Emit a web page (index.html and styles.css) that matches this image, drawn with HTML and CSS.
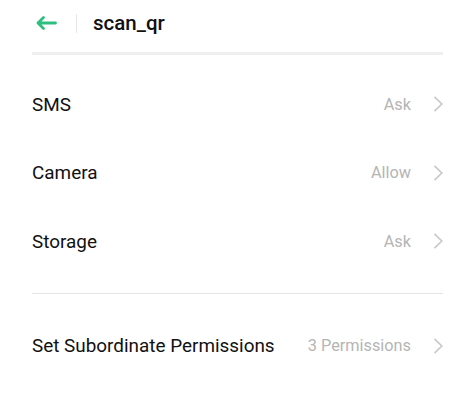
FILE: index.html
```html
<!DOCTYPE html>
<html>
<head>
<meta charset="utf-8">
<link rel="stylesheet" href="styles.css">
</head>
<body>
<div class="page">
  <header class="header">
    <svg class="back" width="22" height="16" viewBox="0 0 22 16">
      <path d="M20.5 8H3M8.5 2.5L3 8l5.5 5.5" fill="none" stroke="#2dbf7f" stroke-width="2.8" stroke-linecap="round" stroke-linejoin="round"/>
    </svg>
    <span class="vsep"></span>
    <span class="title">scan_qr</span>
  </header>
  <div class="bar"></div>
  <div class="list">
    <div class="row"><span class="label">SMS</span><span class="value">Ask</span><svg class="chev" width="11" height="16" viewBox="0 0 11 16"><path d="M2.5 0.8L9.8 8l-7.3 7.2" fill="none" stroke="#c9c9c9" stroke-width="1.7"/></svg></div>
    <div class="row"><span class="label">Camera</span><span class="value">Allow</span><svg class="chev" width="11" height="16" viewBox="0 0 11 16"><path d="M2.5 0.8L9.8 8l-7.3 7.2" fill="none" stroke="#c9c9c9" stroke-width="1.7"/></svg></div>
    <div class="row"><span class="label">Storage</span><span class="value">Ask</span><svg class="chev" width="11" height="16" viewBox="0 0 11 16"><path d="M2.5 0.8L9.8 8l-7.3 7.2" fill="none" stroke="#c9c9c9" stroke-width="1.7"/></svg></div>
  </div>
  <div class="divider"></div>
  <div class="list second">
    <div class="row"><span class="label">Set Subordinate Permissions</span><span class="value">3 Permissions</span><svg class="chev" width="11" height="16" viewBox="0 0 11 16"><path d="M2.5 0.8L9.8 8l-7.3 7.2" fill="none" stroke="#c9c9c9" stroke-width="1.7"/></svg></div>
  </div>
</div>
</body>
</html>
```
FILE: styles.css
```css
html, body {
  margin: 0;
  padding: 0;
  background: #ffffff;
  font-family: Roboto, "Noto Sans", sans-serif;
}
.page {
  width: 474px;
  height: 420px;
  padding: 0 31px 0 32px;
  box-sizing: border-box;
}
.header {
  height: 52px;
  display: flex;
  align-items: center;
  padding-bottom: 6px;
  box-sizing: border-box;
}
.back {
  margin-left: 3px;
  display: block;
}
.vsep {
  width: 1px;
  height: 19px;
  background: #e6e6e6;
  margin-left: 19px;
  margin-right: 16px;
}
.title {
  font-size: 20.5px;
  font-weight: 500;
  color: #111;
}
.bar {
  height: 3px;
  background: #efefef;
}
.list {
  padding-top: 15px;
}
.list.second {
  padding-top: 18px;
}
.row {
  height: 68.5px;
  display: flex;
  align-items: center;
}
.label {
  flex: 1;
  font-size: 18.9px;
  color: #111;
}
.value {
  font-size: 16.3px;
  color: #b5b5b5;
  margin-right: 21px;
}
.chev {
  display: block;
}
.divider {
  margin-top: 17px;
  height: 1px;
  background: #e6e6e6;
}
```
